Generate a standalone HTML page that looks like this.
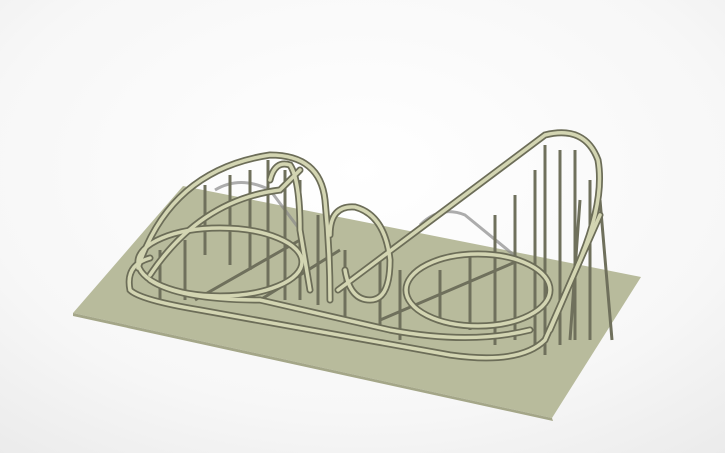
<!DOCTYPE html>
<html><head><style>
html,body{margin:0;padding:0;width:725px;height:453px;overflow:hidden}
body{background:radial-gradient(ellipse 760px 480px at 360px 170px,#ffffff 0%,#f7f7f7 50%,#e0e0e0 100%)}
svg{position:absolute;left:0;top:0}
</style></head><body>
<svg width="725" height="453" viewBox="0 0 725 453">
<polygon points="183,186 641,277 552,418 73,313" fill="#b8bb9c"/>
<polygon points="73,313 552,418 553,421 73,316" fill="#a4a688"/>
<g stroke="#8a8a8a" stroke-width="3" fill="none" opacity="0.7">
<path d="M215,190 Q240,175 270,190 L300,230"/>
<path d="M420,225 Q440,205 465,215 L520,260"/>
</g>
<g stroke="#6f705c" stroke-width="3" fill="none">
<path d="M205,185 V255 M230,175 V265 M250,170 V270 M268,160 V290 M285,170 V300 M300,180 V300 M318,215 V305 M345,250 V320 M380,260 V330 M400,270 V340 M440,270 V320 M470,255 V330 M495,215 V345 M515,195 V340 M535,170 V345 M545,145 V355 M560,150 V345 M575,150 V340 M590,180 V340 M600,200 L612,340 M580,200 L570,340 M160,250 V300 M185,240 V300"/>
<path d="M195,300 L300,240 M380,320 L520,260 M260,300 L340,250"/>
</g>
<g fill="none" stroke-linecap="round">
<g stroke="#6c6d58" stroke-width="7">
<path d="M150,258 Q125,265 130,290 Q140,300 200,310 L450,355 Q520,365 545,340 L600,215"/>
<path d="M138,268 Q170,170 270,155 Q320,155 325,200 Q330,250 330,300"/>
<path d="M150,275 Q200,200 280,190 L300,170"/>
<path d="M270,180 Q275,160 290,165 Q300,180 300,230 L310,290"/>
<path d="M338,290 L545,135 Q585,125 598,160 Q605,200 580,260 L550,330"/>
<path d="M330,235 Q330,205 355,207 Q385,215 390,260 Q390,300 370,300 Q350,300 345,270"/>
<ellipse cx="220" cy="262" rx="82" ry="34"/>
<ellipse cx="478" cy="290" rx="72" ry="36"/>
<path d="M150,280 Q180,300 260,300 L390,330 Q470,345 530,330"/>
</g>
<g stroke="#d3d5b2" stroke-width="3.5">
<path d="M150,258 Q125,265 130,290 Q140,300 200,310 L450,355 Q520,365 545,340 L600,215"/>
<path d="M138,268 Q170,170 270,155 Q320,155 325,200 Q330,250 330,300"/>
<path d="M150,275 Q200,200 280,190 L300,170"/>
<path d="M270,180 Q275,160 290,165 Q300,180 300,230 L310,290"/>
<path d="M338,290 L545,135 Q585,125 598,160 Q605,200 580,260 L550,330"/>
<path d="M330,235 Q330,205 355,207 Q385,215 390,260 Q390,300 370,300 Q350,300 345,270"/>
<ellipse cx="220" cy="262" rx="82" ry="34"/>
<ellipse cx="478" cy="290" rx="72" ry="36"/>
<path d="M150,280 Q180,300 260,300 L390,330 Q470,345 530,330"/>
</g>
</g>
</svg>
</body></html>
